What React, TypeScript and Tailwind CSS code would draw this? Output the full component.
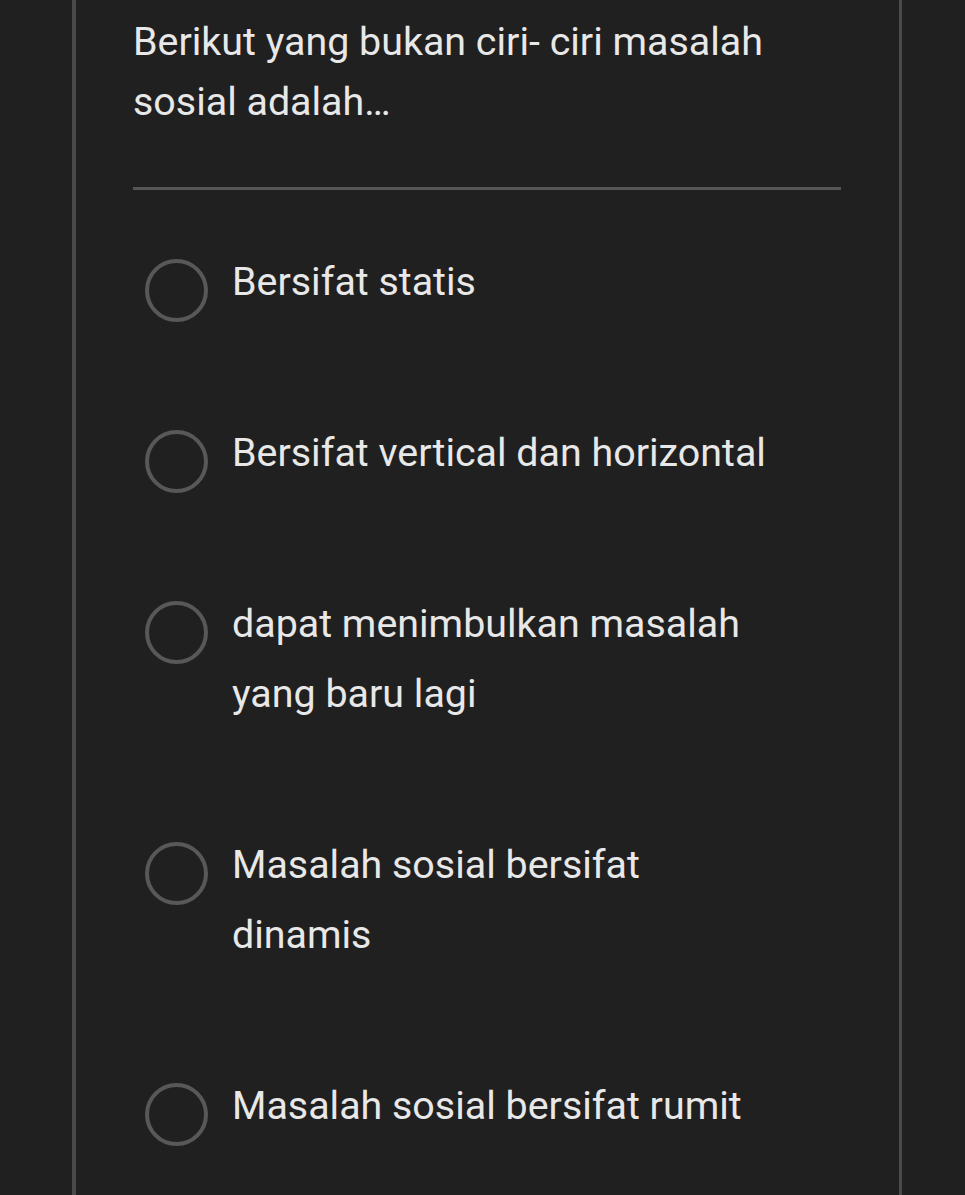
// App.tsx — soal pilihan ganda (tema gelap)
const question = "Berikut yang bukan ciri- ciri masalah sosial adalah…";

const options = [
  "Bersifat statis",
  "Bersifat vertical dan horizontal",
  "dapat menimbulkan masalah yang baru lagi",
  "Masalah sosial bersifat dinamis",
  "Masalah sosial bersifat rumit",
];

function OptionRow({ label }: { label: string }) {
  return (
    <label className="flex items-start cursor-pointer">
      {/* lingkaran sedikit di bawah garis tengah baris, tanpa menambah tinggi baris */}
      <span className="ml-3 h-[70px] shrink-0 pt-3" aria-hidden>
        <span className="block h-[63px] w-[63px] rounded-full border-4 border-[#585858]" />
      </span>
      <span className="ml-6 max-w-[540px] text-[39.4px] leading-[70px] text-[#e8e8e8]">{label}</span>
    </label>
  );
}

export default function App() {
  return (
    <div className="min-h-[1195px] w-full bg-[#202020] font-['Roboto',sans-serif]">
      <div className="ml-[72px] min-h-[1195px] w-[830px] border-l-4 border-r-[3px] border-[#4a4a4a] pl-[57px] pr-[58px] pt-3">
        <p className="text-[39.4px] leading-[60px] text-[#e8e8e8]">{question}</p>
        <div className="mt-[55px] h-[3px] bg-[#555555]" />
        <div className="mt-[57px] flex flex-col gap-[101px]">
          {options.map((o) => (
            <OptionRow key={o} label={o} />
          ))}
        </div>
      </div>
    </div>
  );
}
